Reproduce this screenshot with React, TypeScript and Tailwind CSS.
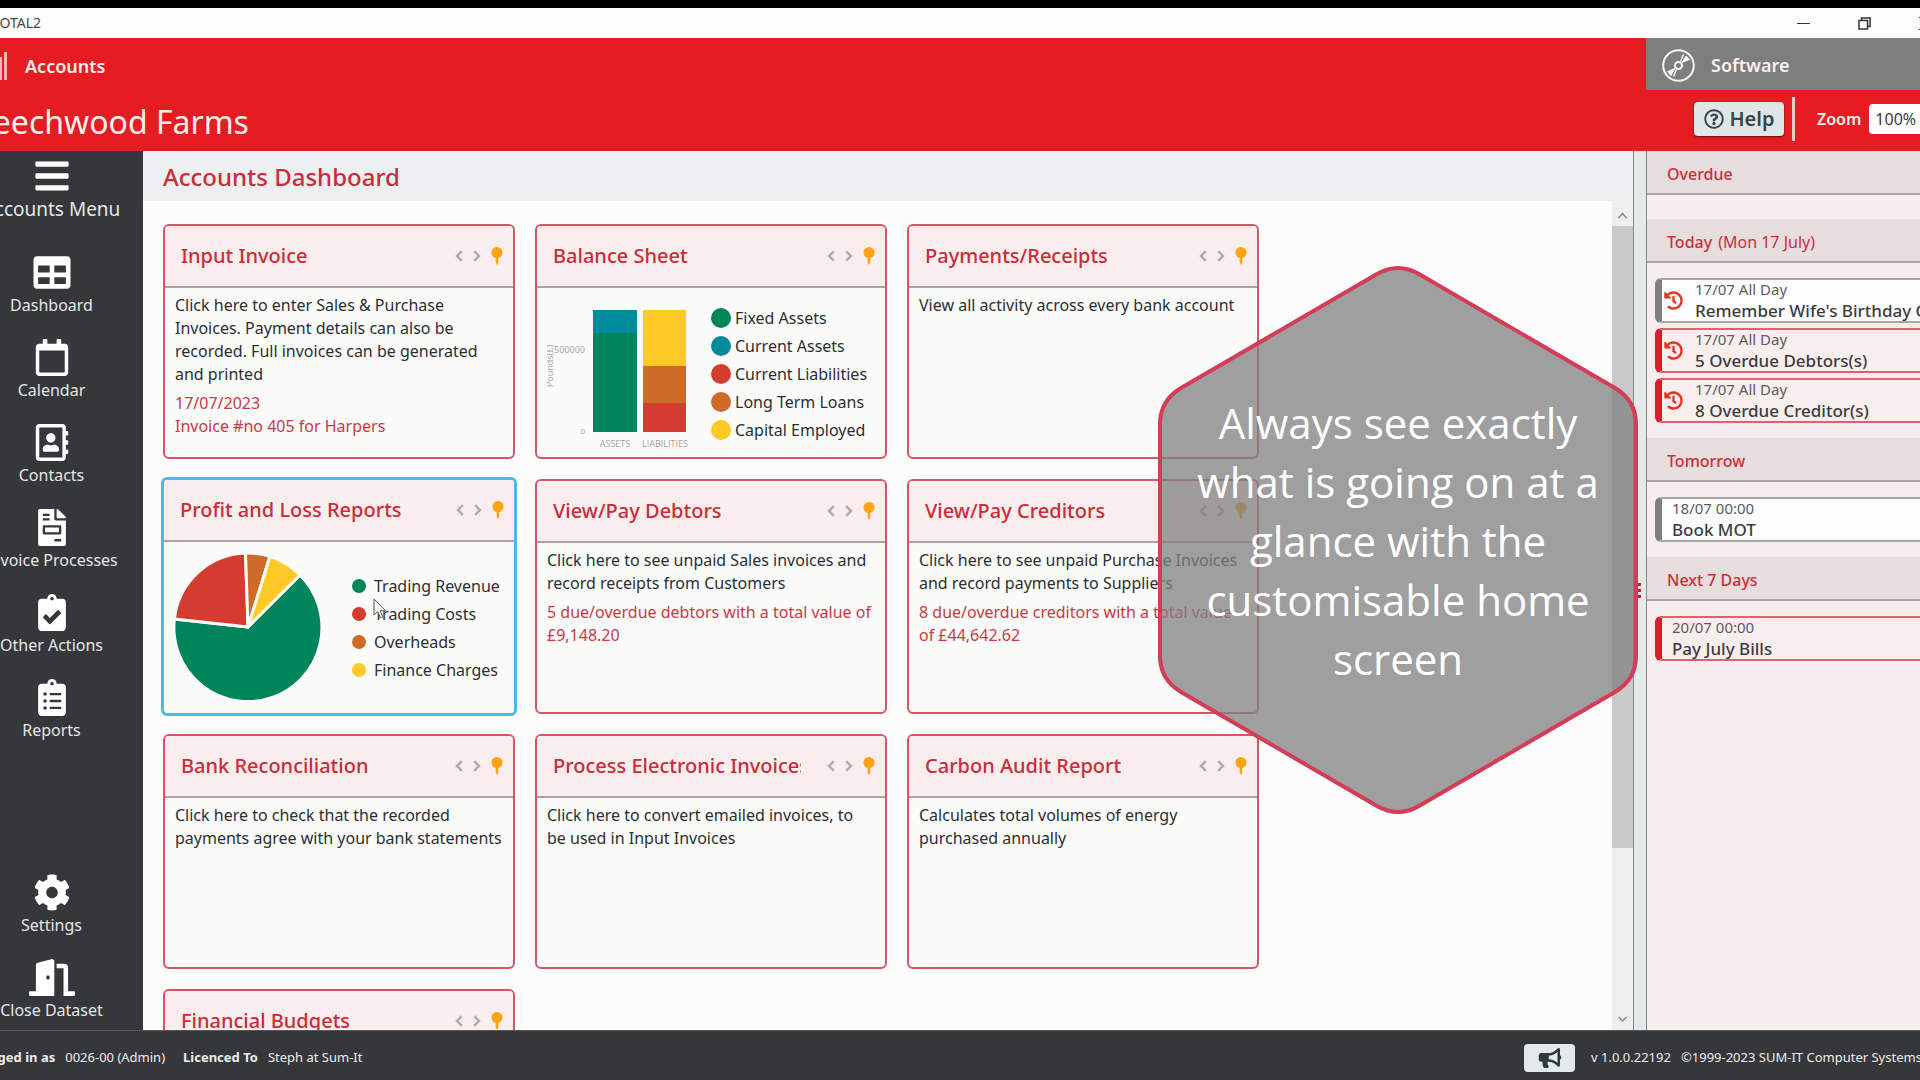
import React from 'react';
import {
  FaBars,
  FaBullhorn,
  FaClipboardCheck,
  FaClipboardList,
  FaCog,
  FaDoorOpen,
  FaFileInvoice,
  FaHistory,
  FaRegAddressBook,
  FaRegCalendar,
  FaRegQuestionCircle,
  FaTable,
} from 'react-icons/fa';
import type { IconType } from 'react-icons';

interface NavEntry {
  label: string;
  icon: IconType;
}

const mainNav: NavEntry[] = [
  { label: 'Dashboard', icon: FaTable },
  { label: 'Calendar', icon: FaRegCalendar },
  { label: 'Contacts', icon: FaRegAddressBook },
  { label: 'Invoice Processes', icon: FaFileInvoice },
  { label: 'Other Actions', icon: FaClipboardCheck },
  { label: 'Reports', icon: FaClipboardList },
];

const bottomNav: NavEntry[] = [
  { label: 'Settings', icon: FaCog },
  { label: 'Close Dataset', icon: FaDoorOpen },
];

interface LegendEntry {
  label: string;
  color: string;
}

const balanceLegend: LegendEntry[] = [
  { label: 'Fixed Assets', color: 'bg-[#00845c]' },
  { label: 'Current Assets', color: 'bg-[#008b9d]' },
  { label: 'Current Liabilities', color: 'bg-[#d43c30]' },
  { label: 'Long Term Loans', color: 'bg-[#cf6b29]' },
  { label: 'Capital Employed', color: 'bg-[#ffc926]' },
];

const profitLegend: LegendEntry[] = [
  { label: 'Trading Revenue', color: 'bg-[#00845c]' },
  { label: 'Trading Costs', color: 'bg-[#d43c30]' },
  { label: 'Overheads', color: 'bg-[#cf6b29]' },
  { label: 'Finance Charges', color: 'bg-[#ffc926]' },
];

const BalanceChart = () => (
  <div className="flex items-start pt-0.5">
    <svg width="152" height="156" viewBox="0 0 152 156" className="shrink-0">
      <rect x="46" y="14" width="44" height="24" fill="#008b9d" />
      <rect x="46" y="37" width="44" height="99" fill="#00845c" />
      <rect x="96" y="14" width="43" height="56" fill="#ffc926" />
      <rect x="96" y="70" width="43" height="37" fill="#cf6b29" />
      <rect x="96" y="107" width="43" height="29" fill="#d43c30" />
      <g fill="#a3a3a3" fontFamily="Open Sans" fontSize="8">
        <text x="38" y="57" textAnchor="end" fontSize="9">500000</text>
        <text x="38" y="138" textAnchor="end">0</text>
        <text x="68" y="151" textAnchor="middle" fontSize="9">ASSETS</text>
        <text x="118" y="151" textAnchor="middle" fontSize="9">LIABILITIES</text>
        <text transform="translate(6 70) rotate(-90)" textAnchor="middle" fontSize="9">Pounds(£)</text>
      </g>
    </svg>
    <ul className="ml-3 pt-2">
      {balanceLegend.map((item) => (
        <li key={item.label} className="flex h-7 items-center gap-1 whitespace-nowrap">
          <span className={`h-5 w-5 shrink-0 rounded-full ${item.color}`}></span>
          <span>{item.label}</span>
        </li>
      ))}
    </ul>
  </div>
);

const ProfitChart = () => (
  <div className="relative flex items-start pt-1">
    <svg width="148" height="150" viewBox="-74 -75 148 150" className="shrink-0">
      <g stroke="#fbfbf8" strokeWidth="3" strokeLinejoin="round">
        <path d="M0 0 L52 -52 A74 74 0 1 1 -73.6 -8 Z" fill="#00845c" />
        <path d="M0 0 L-73.6 -8 A74 74 0 0 1 -2.500 -74 Z" fill="#d43c30" />
        <path d="M0 0 L-2.500 -74 A74 74 0 0 1 22 -70.700 Z" fill="#cf6b29" />
        <path d="M0 0 L22 -70.700 A74 74 0 0 1 52 -52 Z" fill="#ffc926" />
      </g>
    </svg>
    <ul className="ml-[30px] pt-5">
      {profitLegend.map((item) => (
        <li key={item.label} className="flex h-7 items-center gap-2 whitespace-nowrap">
          <span className={`h-3.5 w-3.5 shrink-0 rounded-full ${item.color}`}></span>
          <span>{item.label}</span>
        </li>
      ))}
    </ul>
    <svg width="14" height="22" viewBox="0 0 14 22" className="absolute top-[50px] left-[199px]">
      <path
        d="M1 1 V17 L4.800 13.600 L7.400 19.800 L9.800 18.800 L7.200 12.700 H12.500 Z"
        fill="#f6f6f6"
        stroke="#555"
        strokeWidth="1"
      />
    </svg>
  </div>
);

interface CardProps {
  title: string;
  text?: string;
  notes?: string[];
  selected?: boolean;
  children?: React.ReactNode;
}

const DashboardCard: React.FC<CardProps> = ({ title, text, notes, selected, children }) => (
  <article
    className={
      selected
        ? '-m-0.5 flex h-[239px] flex-col overflow-hidden rounded-md border-[3px] border-[#4cbbe3] bg-[#fbfbf9]'
        : 'flex h-[235px] flex-col overflow-hidden rounded-md border-2 border-[#d95564] bg-[#fbfbf9]'
    }
  >
    <header className="flex h-[62px] shrink-0 items-center border-b-2 border-[#aaa3a2] bg-[#f9eeed] pr-2.5 pl-4">
      <h2 className="min-w-0 flex-1 overflow-hidden text-xl font-medium whitespace-nowrap text-[#cc2b37]">{title}</h2>
      <div className="ml-[26px] flex items-center gap-2.5 text-[#b3adad]">
        <button aria-label={`Move ${title} back`}>
          <svg width="8" height="12" viewBox="0 0 8 12" fill="none" stroke="currentColor" strokeWidth="2.500">
            <path d="M6.800 1.200 L2 6 L6.800 10.800" />
          </svg>
        </button>
        <button aria-label={`Move ${title} forward`}>
          <svg width="8" height="12" viewBox="0 0 8 12" fill="none" stroke="currentColor" strokeWidth="2.500">
            <path d="M1.200 1.200 L6 6 L1.200 10.800" />
          </svg>
        </button>
        <button aria-label={`Pin ${title}`}>
          <svg width="12" height="18" viewBox="0 0 12 18" fill="#fba312">
            <circle cx="6" cy="5.500" r="5.500" />
            <path d="M4.700 10 H7.300 V15.500 L6 18 L4.700 15.500 Z" />
          </svg>
        </button>
      </div>
    </header>
    <div className="px-2.5 pt-1.5 text-base leading-[23px] text-[#2b2f33]">
      {text && <p>{text}</p>}
      {notes && (
        <div className="mt-1.5 text-[#cc3844]">
          {notes.map((note) => (
            <p key={note}>{note}</p>
          ))}
        </div>
      )}
      {children}
    </div>
  </article>
);

const NavButton: React.FC<{ entry: NavEntry }> = ({ entry }) => {
  const Icon = entry.icon;
  return (
    <button className="flex h-[85px] w-full flex-col items-center text-base leading-6 whitespace-nowrap text-[#e6e6e6]">
      <Icon className="mb-0.5 h-[37px] w-[46px] text-white" />
      {entry.label}
    </button>
  );
};

interface TaskProps {
  when: string;
  title: string;
  urgent?: boolean;
  recurring?: boolean;
}

const Task: React.FC<TaskProps> = ({ when, title, urgent, recurring }) => (
  <li
    className={
      urgent
        ? 'flex h-[45px] items-center rounded-l-md border-2 border-l-[7px] border-[#e0606c] border-l-[#d81e2b] bg-[#f8eeee]'
        : 'flex h-[45px] items-center rounded-l-md border-2 border-l-[7px] border-[#a8a5a5] border-l-[#808080] bg-[#fdfdfd]'
    }
  >
    {recurring && <FaHistory size={19} className="ml-0.5 shrink-0 text-[#e63322]" />}
    <div className={recurring ? 'ml-3 pb-0.5 whitespace-nowrap' : 'ml-2.5 pb-0.5 whitespace-nowrap'}>
      <p className="text-[15px] leading-[21px] text-[#5c5c5c]">{when}</p>
      <p className="text-[17px] leading-[21px] font-medium text-[#3c3c3c]">{title}</p>
    </div>
  </li>
);

interface TaskGroupProps {
  title: string;
  detail?: string;
  children?: React.ReactNode;
}

const TaskGroup: React.FC<TaskGroupProps> = ({ title, detail, children }) => (
  <section>
    <h3 className="flex h-11 items-center gap-1.5 border-b-2 border-[#aba6a6] bg-[#e6dddd] pt-1 pl-5 text-base font-medium text-[#d02c3a]">
      {title}
      {detail && <span className="font-normal">{detail}</span>}
    </h3>
    {children ? (
      <ul className="flex flex-col gap-[5px] py-[15px] pl-2">{children}</ul>
    ) : (
      <div className="h-6"></div>
    )}
  </section>
);

const Callout = () => (
  <div className="absolute top-[264px] right-[280px] flex h-[552px] w-[484px] items-center justify-center">
    <svg width="484" height="552" viewBox="0 0 484 552" className="absolute inset-0">
      <path
        d="M221 10 Q242 -2 263 10 L459 124 C474 133 480 145 480 160 V392 C480 407 474 419 459 428 L263 542 Q242 554 221 542 L25 428 C10 419 4 407 4 392 V160 C4 145 10 133 25 124 Z"
        fill="#808080"
        fillOpacity="0.75"
        stroke="#d43c57"
        strokeWidth="4"
      />
    </svg>
    <p className="relative w-[430px] text-center font-['Open_Sans',sans-serif] text-[42px] leading-[59px] text-white">
      Always see exactly what is going on at a glance with the customisable home screen
    </p>
  </div>
);

const App = () => {
  return (
    <div className="relative flex h-screen flex-col overflow-hidden bg-[#fcfcfc] font-['Noto_Sans',sans-serif]">
      <div className="h-2 shrink-0 bg-black"></div>

      <div className="flex h-[30px] shrink-0 items-center justify-between bg-[#fdfdfd]">
        <span className="-ml-2 text-sm text-[#4a4a4a]">TOTAL2</span>
        <div className="-mr-3 flex items-center gap-12 text-[#333]">
          <button aria-label="Minimise">
            <svg width="13" height="13" viewBox="0 0 13 13" fill="none" stroke="currentColor">
              <path d="M0 6.500 H13" />
            </svg>
          </button>
          <button aria-label="Restore">
            <svg width="13" height="13" viewBox="0 0 13 13" fill="none" stroke="currentColor" strokeWidth="1.500">
              <path d="M1 3.500 H9.500 V12 H1 Z M3.500 3.500 V1 H12 V9.500 H9.500" />
            </svg>
          </button>
          <button aria-label="Close">
            <svg width="13" height="13" viewBox="0 0 13 13" fill="none" stroke="currentColor">
              <path d="M0 0 L13 13 M13 0 L0 13" />
            </svg>
          </button>
        </div>
      </div>

      <header className="flex h-[113px] shrink-0 bg-[#e51d23] text-[#fdeeee]">
        <div className="flex-1">
          <div className="flex h-[52px] items-center gap-[18px] pt-1">
            <svg width="7" height="28" viewBox="0 0 7 28" fill="#f7b5b7">
              <rect x="0" y="5" width="2" height="23" />
              <rect x="4" y="0" width="3" height="28" />
            </svg>
            <span className="text-lg font-semibold">Accounts</span>
          </div>
          <h1 className="-ml-7 pt-2 text-[32px] leading-[48px]">Beechwood Farms</h1>
        </div>
        <div className="w-[274px]">
          <div className="flex h-[52px] items-center gap-4 bg-[#7d7f7f] pt-0.5 pl-4">
            <svg width="33" height="33" viewBox="0 0 33 33" fill="none" stroke="#f4f4f4" strokeWidth="2">
              <circle cx="16.500" cy="16.500" r="15.300" />
              <circle cx="16.500" cy="16.500" r="3.500" />
              <path d="M18.500 12.500 L21.500 5.500 M14.500 20.500 L11.500 27.500" strokeWidth="1.500" />
              <path
                d="M20 13.500 L24 7 L27.500 10.500 Z M13 19.500 L5.500 22.500 L9 26.500 Z"
                fill="#f4f4f4"
                strokeWidth="1"
              />
            </svg>
            <span className="text-lg font-semibold">Software</span>
          </div>
          <div className="flex h-[61px] items-center pb-1 pl-12">
            <button className="flex h-[34px] w-[90px] shrink-0 items-center justify-center gap-1.5 rounded bg-[#dfe6e8] text-xl font-semibold text-[#39444c] shadow-[0_1px_2px_rgba(0,0,0,0.6)]">
              <FaRegQuestionCircle size={20} />
              Help
            </button>
            <div className="ml-2 h-11 w-[3px] shrink-0 bg-[#f8c9cb]"></div>
            <label htmlFor="zoom" className="ml-[22px] text-base font-semibold">
              Zoom
            </label>
            <select
              id="zoom"
              className="ml-2 h-[30px] w-24 shrink-0 appearance-none rounded bg-white pl-1.5 text-base text-[#3c3c3c]"
            >
              <option>100%</option>
            </select>
          </div>
        </div>
      </header>

      <div className="flex min-h-0 flex-1">
        <nav className="-ml-10 flex w-[183px] shrink-0 flex-col bg-[#35373a]">
          <button className="flex flex-col items-center pt-1.5 text-[19px] leading-7 whitespace-nowrap text-[#e6e6e6]">
            <FaBars size={38} className="text-white" />
            Accounts Menu
          </button>
          <div className="mt-[31px]">
            {mainNav.map((entry) => (
              <NavButton key={entry.label} entry={entry} />
            ))}
          </div>
          <div className="mt-auto -mb-3.5">
            {bottomNav.map((entry) => (
              <NavButton key={entry.label} entry={entry} />
            ))}
          </div>
        </nav>

        <main className="flex min-w-0 flex-1 flex-col bg-[#ecf0f1]">
          <h1 className="h-[50px] shrink-0 pt-2 pl-5 text-2xl leading-9 font-medium text-[#cc2b37]">
            Accounts Dashboard
          </h1>
          <div className="flex min-h-0 flex-1">
            <div className="min-w-0 flex-1 overflow-hidden bg-[#fcfcfc] px-5 pt-[23px]">
              <div className="grid grid-cols-[repeat(auto-fill,352px)] gap-5 pr-60">
                <DashboardCard
                  title="Input Invoice"
                  text="Click here to enter Sales & Purchase Invoices. Payment details can also be recorded. Full invoices can be generated and printed"
                  notes={['17/07/2023', 'Invoice #no 405 for Harpers']}
                />
                <DashboardCard title="Balance Sheet">
                  <BalanceChart />
                </DashboardCard>
                <DashboardCard title="Payments/Receipts" text="View all activity across every bank account" />
                <DashboardCard title="Profit and Loss Reports" selected>
                  <ProfitChart />
                </DashboardCard>
                <DashboardCard
                  title="View/Pay Debtors"
                  text="Click here to see unpaid Sales invoices and record receipts from Customers"
                  notes={['5 due/overdue debtors with a total value of £9,148.20']}
                />
                <DashboardCard
                  title="View/Pay Creditors"
                  text="Click here to see unpaid Purchase Invoices and record payments to Suppliers"
                  notes={['8 due/overdue creditors with a total value of £44,642.62']}
                />
                <DashboardCard
                  title="Bank Reconciliation"
                  text="Click here to check that the recorded payments agree with your bank statements"
                />
                <DashboardCard
                  title="Process Electronic Invoices"
                  text="Click here to convert emailed invoices, to be used in Input Invoices"
                />
                <DashboardCard title="Carbon Audit Report" text="Calculates total volumes of energy purchased annually" />
                <DashboardCard title="Financial Budgets" />
              </div>
            </div>
            <div className="flex w-[21px] shrink-0 flex-col items-center bg-[#eef0f0] pt-2 pb-1.5 text-[#8a8a8a]">
              <svg width="9" height="17" viewBox="0 0 9 17" fill="none" stroke="currentColor" strokeWidth="1.500">
                <path d="M0.500 9 L4.500 4.500 L8.500 9" />
              </svg>
              <div className="h-[622px] w-full bg-[#c9c9c9]"></div>
              <svg width="9" height="9" viewBox="0 0 9 9" className="mt-auto" fill="none" stroke="currentColor" strokeWidth="1.500">
                <path d="M0.500 2 L4.500 6 L8.500 2" />
              </svg>
            </div>
          </div>
        </main>

        <div className="flex w-3.5 shrink-0 items-center border-x border-[#868888] bg-[#e6e9e9]">
          <svg width="7" height="15" viewBox="0 0 7 15" fill="#c9202f">
            <path d="M1 0 h6 v3 h-6z M1 6 h6 v3 h-6z M1 12 h6 v3 h-6z" />
          </svg>
        </div>

        <aside className="w-[273px] shrink-0 overflow-hidden bg-[#f7eded]">
          <div className="-mr-4">
            <TaskGroup title="Overdue" />
            <TaskGroup title="Today" detail="(Mon 17 July)">
              <Task when="17/07 All Day" title="Remember Wife's Birthday Card" recurring />
              <Task when="17/07 All Day" title="5 Overdue Debtors(s)" urgent recurring />
              <Task when="17/07 All Day" title="8 Overdue Creditor(s)" urgent recurring />
            </TaskGroup>
            <TaskGroup title="Tomorrow">
              <Task when="18/07 00:00" title="Book MOT" />
            </TaskGroup>
            <TaskGroup title="Next 7 Days">
              <Task when="20/07 00:00" title="Pay July Bills" urgent />
            </TaskGroup>
          </div>
        </aside>
      </div>

      <footer className="flex h-[50px] shrink-0 items-center border-t border-[#55585a] bg-[#35373a] pt-1 text-[13px] whitespace-nowrap text-[#ededed]">
        <span className="-ml-[26px] font-bold">Logged in as</span>
        <span className="ml-2.5">0026-00 (Admin)</span>
        <span className="ml-[18px] font-bold">Licenced To</span>
        <span className="ml-2.5">Steph at Sum-It</span>
        <div className="ml-auto flex w-[396px] shrink-0 items-center">
          <button
            aria-label="Announcements"
            className="flex h-7 w-[51px] shrink-0 items-center justify-center rounded bg-[#e3eaea] text-[#2f3a3d]"
          >
            <FaBullhorn className="h-5 w-6" />
          </button>
          <span className="ml-4">v 1.0.0.22192</span>
          <span className="ml-2.5">©1999-2023 SUM-IT Computer Systems</span>
        </div>
      </footer>

      <Callout />
    </div>
  );
};

export default App;
